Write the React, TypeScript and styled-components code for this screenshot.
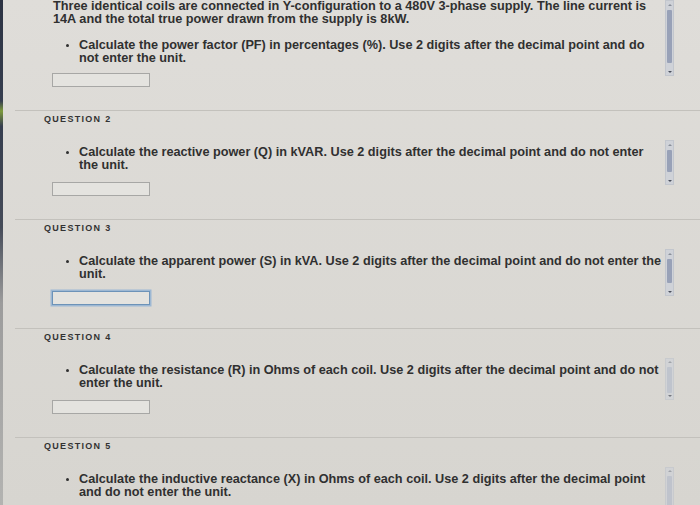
import React from 'react'
import styled, { createGlobalStyle } from 'styled-components'

const GlobalStyle = createGlobalStyle`
  html, body {
    margin: 0;
    padding: 0;
  }
  body {
    background: #dad8d3;
    font-family: 'Liberation Sans', Arial, sans-serif;
    color: #303030;
  }
`

const Screen = styled.div`
  display: flex;
  width: 700px;
  height: 505px;
  overflow: hidden;
  background: linear-gradient(#dfddd9, #d7d5d0);
`

const EdgeStrip = styled.div`
  width: 3px;
  flex-shrink: 0;
  background: linear-gradient(
    #2c3343 0%,
    #363e4f 20%,
    #7d9a3c 22%,
    #363e4f 25%,
    #454b58 45%,
    #9c9c9c 60%,
    #b3b3b1 100%
  );
`

const Page = styled.div`
  flex: 1;
  display: flex;
  flex-direction: column;
  padding-left: 12px;
`

const Intro = styled.div`
  padding: 0 0 23px 37px;
`

const Section = styled.section`
  border-top: 1px solid #c3c1bc;
  padding: 3px 0 23px 29px;
`

const Label = styled.div`
  font-size: 9px;
  line-height: 10px;
  font-weight: 700;
  letter-spacing: 1.3px;
  color: #333;
`

const Body = styled.div<{ $top?: number }>`
  display: flex;
  align-items: flex-start;
  margin-top: ${p => p.$top ?? 0}px;
  margin-left: ${p => (p.$top ? 8 : 0)}px;
`

const Content = styled.div<{ $pad: number }>`
  width: 611px;
  flex-shrink: 0;
  padding-top: ${p => p.$pad}px;
`

const Lead = styled.p`
  margin: 0 0 13px 1px;
  font-size: 12.7px;
  line-height: 13px;
  font-weight: 700;
`

const Points = styled.ul<{ $gap: number }>`
  margin: 0 0 ${p => p.$gap}px;
  padding-left: 27px;
  list-style: disc;
`

const Point = styled.li`
  font-size: 12.7px;
  line-height: 13px;
  font-weight: 700;
  &::marker {
    font-size: 10px;
  }
`

const Answer = styled.input<{ $focused?: boolean }>`
  display: block;
  box-sizing: border-box;
  width: 98px;
  height: 14px;
  margin: 0;
  padding: 0 2px;
  border: 1px solid ${p => (p.$focused ? '#6d93b8' : '#a7a7a5')};
  box-shadow: ${p => (p.$focused ? '0 0 0 1.5px #9db8d3' : 'none')};
  background: #e4e3df;
  outline: none;
`

const Scroll = styled.div<{ $h: number; $faded?: boolean }>`
  display: flex;
  flex-direction: column;
  align-items: center;
  box-sizing: border-box;
  width: 9px;
  height: ${p => p.$h}px;
  margin-left: 2px;
  border: 1px solid #c2c6cd;
  background: #cfd2d8;
  opacity: ${p => (p.$faded ? 0.7 : 1)};
`

const Arrow = styled.div<{ $down?: boolean }>`
  height: 7px;
  display: flex;
  align-items: center;
  justify-content: center;
  &::before {
    content: '';
    border-left: 2px solid transparent;
    border-right: 2px solid transparent;
    ${p =>
      p.$down ? 'border-top: 2px solid #4a4f5c;' : 'border-bottom: 2px solid #8a8f9a;'}
  }
`

const Track = styled.div<{ $offset: number }>`
  flex: 1;
  align-self: stretch;
  padding: ${p => p.$offset}px 1px 0;
`

const Thumb = styled.div<{ $h: number; $faded?: boolean }>`
  height: ${p => p.$h}px;
  background: ${p => (p.$faded ? '#b5bccb' : '#98a1b7')};
  border-radius: 1px;
`

type Bar = { h: number; offset: number; thumb: number; faded?: boolean }

const ScrollBar = ({ h, offset, thumb, faded }: Bar) => (
  <Scroll $h={h} $faded={faded}>
    <Arrow />
    <Track $offset={offset}>
      <Thumb $h={thumb} $faded={faded} />
    </Track>
    <Arrow $down />
  </Scroll>
)

const questions: { n: number; text: string; bar: Bar; focused?: boolean }[] = [
  {
    n: 2,
    text: 'Calculate the reactive power (Q) in kVAR. Use 2 digits after the decimal point and do not enter the unit.',
    bar: { h: 45, offset: 2, thumb: 22 },
  },
  {
    n: 3,
    text: 'Calculate the apparent power (S) in kVA. Use 2 digits after the decimal point and do not enter the unit.',
    bar: { h: 47, offset: 2, thumb: 24 },
    focused: true,
  },
  {
    n: 4,
    text: 'Calculate the resistance (R) in Ohms of each coil. Use 2 digits after the decimal point and do not enter the unit.',
    bar: { h: 42, offset: 1, thumb: 26, faded: true },
  },
  {
    n: 5,
    text: 'Calculate the inductive reactance (X) in Ohms of each coil. Use 2 digits after the decimal point and do not enter the unit.',
    bar: { h: 46, offset: 1, thumb: 30, faded: true },
  },
]

const App = () => (
  <>
    <GlobalStyle />
    <Screen>
      <EdgeStrip />
      <Page>
        <Intro>
          <Body>
            <Content $pad={0}>
              <Lead>
                Three identical coils are connected in Y-configuration to a 480V 3-phase
                supply. The line current is 14A and the total true power drawn from the
                supply is 8kW.
              </Lead>
              <Points $gap={8}>
                <Point>
                  Calculate the power factor (PF) in percentages (%). Use 2 digits after
                  the decimal point and do not enter the unit.
                </Point>
              </Points>
              <Answer type="text" />
            </Content>
            <ScrollBar h={76} offset={2} thumb={53} />
          </Body>
        </Intro>
        {questions.map(q => (
          <Section key={q.n}>
            <Label>QUESTION {q.n}</Label>
            <Body $top={16}>
              <Content $pad={6}>
                <Points $gap={10}>
                  <Point>{q.text}</Point>
                </Points>
                <Answer type="text" $focused={q.focused} />
              </Content>
              <ScrollBar {...q.bar} />
            </Body>
          </Section>
        ))}
      </Page>
    </Screen>
  </>
)

export default App
